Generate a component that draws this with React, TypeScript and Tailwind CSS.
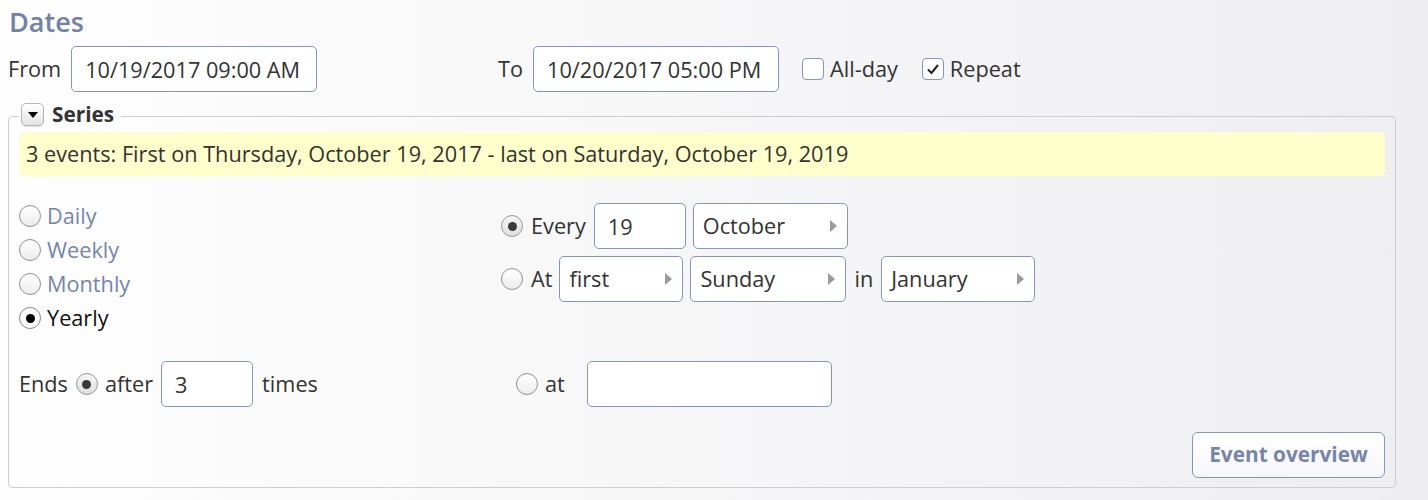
import React from 'react';

type RadioKind = 'off' | 'on' | 'native';

const Radio = ({ kind = 'off' }: { kind?: RadioKind }) => {
  if (kind === 'on') {
    return (
      <span className="flex h-[22px] w-[22px] shrink-0 items-center justify-center rounded-full border border-[#888] bg-white">
        <span className="h-[9px] w-[9px] rounded-full bg-black" />
      </span>
    );
  }
  if (kind === 'native') {
    return (
      <span className="flex h-[22px] w-[22px] shrink-0 items-center justify-center rounded-full border border-[#999] bg-linear-to-b from-[#f6f6f6] to-[#dedede]">
        <span className="h-[9px] w-[9px] rounded-full bg-[#3a3a3a]" />
      </span>
    );
  }
  return <span className="h-[22px] w-[22px] shrink-0 rounded-full border border-[#919191] bg-linear-to-b from-white to-[#ececec]" />;
};

const Checkbox = ({ checked = false }: { checked?: boolean }) => (
  <span className="flex h-[22px] w-[22px] shrink-0 items-center justify-center rounded-[4px] border border-[#8596bd] bg-white">
    {checked && (
      <svg width="14" height="12" viewBox="0 0 14 12">
        <polyline points="2,6.5 5.5,10 12,2" fill="none" stroke="#222" strokeWidth="2" />
      </svg>
    )}
  </span>
);

const Field = ({ value = '', width }: { value?: string; width: string }) => (
  <input
    readOnly
    value={value}
    className={`h-[46px] ${width} shrink-0 rounded-[5px] border border-[#8596bd] bg-white px-[13px] text-[#333] outline-none`}
  />
);

const Select = ({ label, width }: { label: string; width: string }) => (
  <div className={`flex h-[46px] ${width} shrink-0 items-center justify-between rounded-[5px] border border-[#8596bd] bg-white pl-[9px] pr-[10px]`}>
    <span>{label}</span>
    <span className="h-0 w-0 border-y-[6px] border-l-[7px] border-y-transparent border-l-[#9a9a9a]" />
  </div>
);

export default function App() {
  const freqs = [
    { label: 'Daily', active: false },
    { label: 'Weekly', active: false },
    { label: 'Monthly', active: false },
    { label: 'Yearly', active: true },
  ];

  return (
    <div className="min-h-[500px] w-full bg-linear-to-r from-[#fefefe] to-[#eeeef1] pl-2 pr-8 font-['Open_Sans',sans-serif] text-[21.7px] text-[#333]">
      <h2 className="pt-[3px] pl-[1px] text-[27px] font-semibold leading-[37px] text-[#7282aa]">Dates</h2>

      <div className="mt-[6px] flex h-[46px] items-center">
        <div className="flex w-[490px] items-center">
          <span>From</span>
          <div className="ml-[10px]">
            <Field value="10/19/2017 09:00 AM" width="w-[246px]" />
          </div>
        </div>
        <span>To</span>
        <div className="ml-[10px]">
          <Field value="10/20/2017 05:00 PM" width="w-[246px]" />
        </div>
        <div className="ml-[23px] flex items-center gap-[6px]">
          <Checkbox />
          <span>All-day</span>
        </div>
        <div className="ml-[24px] flex items-center gap-[6px]">
          <Checkbox checked />
          <span>Repeat</span>
        </div>
      </div>

      <fieldset className="mt-[11px] rounded-[4px] border border-[#cfcfcf] px-[10px] pt-[3px] pb-[9px]">
        <legend className="px-[2px]">
          <div className="flex h-[26px] items-center pb-[3px] pr-[5px]">
            <span className="flex h-[23px] w-[23px] items-center justify-center rounded-[5px] border border-[#b5b5b5] bg-linear-to-b from-white to-[#e4e4e4] shadow-[0_1px_1px_rgba(0,0,0,0.12)]">
              <span className="h-0 w-0 border-x-[5px] border-t-[6px] border-x-transparent border-t-black" />
            </span>
            <span className="ml-[8px] text-[20.8px] font-bold">Series</span>
          </div>
        </legend>

        <div className="flex h-[44px] items-center rounded-[6px] bg-[#ffffcc] pl-[7px]">
          3 events: First on Thursday, October 19, 2017 - last on Saturday, October 19, 2019
        </div>

        <div className="mt-[23px] flex">
          <div className="w-[482px]">
            {freqs.map((f) => (
              <div key={f.label} className="flex h-[34px] items-center gap-[6px]">
                <Radio kind={f.active ? 'on' : 'off'} />
                <span className={f.active ? 'text-[#111]' : 'text-[#7585ad]'}>{f.label}</span>
              </div>
            ))}
          </div>

          <div className="flex flex-col gap-[7px] pt-[4px]">
            <div className="flex items-center">
              <Radio kind="native" />
              <span className="ml-[8px]">Every</span>
              <div className="ml-[8px]">
                <Field value="19" width="w-[92px]" />
              </div>
              <div className="ml-[7px]">
                <Select label="October" width="w-[155px]" />
              </div>
            </div>
            <div className="flex items-center">
              <Radio />
              <span className="ml-[8px]">At</span>
              <div className="ml-[7px]">
                <Select label="first" width="w-[124px]" />
              </div>
              <div className="ml-[7px]">
                <Select label="Sunday" width="w-[156px]" />
              </div>
              <span className="ml-[8px]">in</span>
              <div className="ml-[8px]">
                <Select label="January" width="w-[154px]" />
              </div>
            </div>
          </div>
        </div>

        <div className="mt-[26px] flex h-[46px] items-center">
          <div className="flex w-[497px] items-center">
            <span>Ends</span>
            <div className="ml-[8px]">
              <Radio kind="native" />
            </div>
            <span className="ml-[7px]">after</span>
            <div className="ml-[8px]">
              <Field value="3" width="w-[92px]" />
            </div>
            <span className="ml-[9px]">times</span>
          </div>
          <Radio />
          <span className="ml-[7px]">at</span>
          <div className="ml-[22px]">
            <Field width="w-[245px]" />
          </div>
        </div>

        <div className="mt-[25px] flex justify-end">
          <button className="h-[46px] w-[193px] rounded-[6px] border border-[#8596bd] bg-linear-to-b from-white to-[#f6f6f9] text-[20.8px] font-bold text-[#7585ad]">
            Event overview
          </button>
        </div>
      </fieldset>
    </div>
  );
}
